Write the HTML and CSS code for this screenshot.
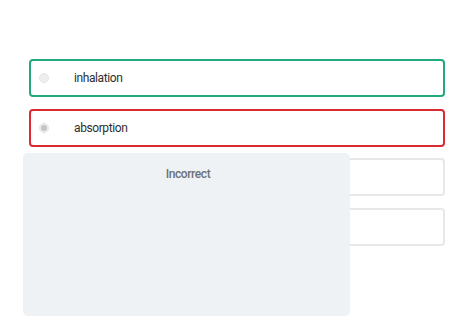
FILE: index.html
```html
<!DOCTYPE html>
<html lang="en">
<head>
  <meta charset="UTF-8">
  <meta name="viewport" content="width=device-width, initial-scale=1.0">
  <title>Quiz</title>
  <link rel="stylesheet" href="styles.css">
</head>
<body>
  <div class="quiz">
    <ul class="options">
      <li class="option correct"><span class="radio"></span><span class="label">inhalation</span></li>
      <li class="option wrong"><span class="radio checked"></span><span class="label">absorption</span></li>
      <li class="option"><span class="radio"></span><span class="label"></span></li>
      <li class="option"><span class="radio"></span><span class="label"></span></li>
    </ul>
    <div class="feedback">Incorrect</div>
  </div>
</body>
</html>
```
FILE: styles.css
```css
* {
  padding: 0;
  margin: 0;
  box-sizing: border-box;
}
body {
  font-family: Roboto, "Liberation Sans", sans-serif;
  background-color: #fff;
}
.quiz {
  position: relative;
  padding: 59px 29px 0;
  height: 324px;
}
.options {
  display: flex;
  flex-direction: column;
  gap: 11.67px;
  list-style: none;
}
.option {
  display: flex;
  align-items: center;
  height: 38px;
  padding-left: 8px;
  border: 2px solid #e6e8ea;
  border-radius: 4px;
}
.option.correct {
  border-color: #23a97f;
}
.option.wrong {
  border-color: #dc2a33;
}
.radio {
  position: relative;
  width: 10px;
  height: 10px;
  border-radius: 50%;
  background-color: #eeeeee;
  border: 1px solid #e6e6e6;
}
/* 选中时中间的小圆点 */
.radio.checked::after {
  content: "";
  position: absolute;
  top: 1px;
  left: 1px;
  width: 6px;
  height: 6px;
  border-radius: 50%;
  background-color: #c4c4c4;
}
.label {
  margin-left: 25px;
  font-size: 12px;
  letter-spacing: -0.4px;
  color: #2e2e2e;
}
/* 盖在选项上方的反馈面板 */
.feedback {
  position: absolute;
  top: 153px;
  left: 23px;
  width: 327px;
  height: 163px;
  padding-top: 14px;
  padding-left: 3px;
  border-radius: 5px;
  background-color: #eef2f5;
  text-align: center;
  font-size: 12px;
  font-weight: 500;
  letter-spacing: -0.4px;
  color: #6c7177;
}
```
